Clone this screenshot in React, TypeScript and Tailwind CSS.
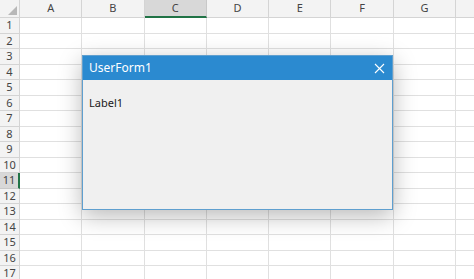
import React from "react";

const cols = ["A", "B", "C", "D", "E", "F", "G", ""];
const rows = Array.from({ length: 17 }, (_, i) => i + 1);

export default function App() {
  return (
    <div
      className="relative w-[474px] h-[279px] overflow-hidden bg-white"
      style={{ fontFamily: '"Noto Sans", "Open Sans", sans-serif' }}
    >
      {/* header row */}
      <div className="flex h-[18px]">
        <div className="relative w-[20px] shrink-0 bg-[#f3f3f3] border-r border-b border-[#d4d4d4]">
          <div className="absolute right-[2px] bottom-[2px] w-0 h-0 border-l-[9px] border-l-transparent border-b-[9px] border-b-[#b8b8b8]" />
        </div>
        {cols.map((c, i) => (
          <div
            key={i}
            className={
              c === "C"
                ? "w-[62.3px] shrink-0 flex items-center justify-center text-[11px] text-[#444] bg-[#d8d8d8] border-r border-[#c8c8c8] border-b-2 border-b-[#217346]"
                : "w-[62.3px] shrink-0 flex items-center justify-center text-[11px] text-[#444] bg-[#f3f3f3] border-r border-b border-[#d4d4d4]"
            }
          >
            {c}
          </div>
        ))}
      </div>
      {rows.map((r) => (
        <div key={r} className="flex h-[15.5px]">
          <div
            className={
              r === 11
                ? "w-[20px] shrink-0 flex items-center justify-center text-[11px] text-[#444] bg-[#d8d8d8] border-b border-[#c8c8c8] border-r-2 border-r-[#217346]"
                : "w-[20px] shrink-0 flex items-center justify-center text-[11px] text-[#444] bg-[#f3f3f3] border-r border-b border-[#d4d4d4]"
            }
          >
            {r}
          </div>
          {cols.map((c, i) => (
            <div
              key={i}
              className="w-[62.3px] shrink-0 border-r border-b border-[#e0e0e0]"
            />
          ))}
        </div>
      ))}

      {/* UserForm dialog */}
      <div className="absolute left-[82px] top-[55px] w-[311px] h-[155px] flex flex-col border border-[#5f9fcf] bg-[#f0f0f0] shadow-[0_6px_22px_rgba(0,0,0,0.28)]">
        <div className="h-[24px] shrink-0 flex items-center justify-between bg-[#2b8ad0] pl-[6px] pr-[7px]">
          <span className="text-[12px] text-white leading-none">UserForm1</span>
          <svg width="11" height="11" viewBox="0 0 11 11">
            <path d="M1 1 L10 10 M10 1 L1 10" stroke="white" strokeWidth="1.1" fill="none" />
          </svg>
        </div>
        <div className="flex-1 pl-[6px] pt-[17px]">
          <span className="block text-[11px] text-[#1a1a1a] leading-none">Label1</span>
        </div>
      </div>
    </div>
  );
}
